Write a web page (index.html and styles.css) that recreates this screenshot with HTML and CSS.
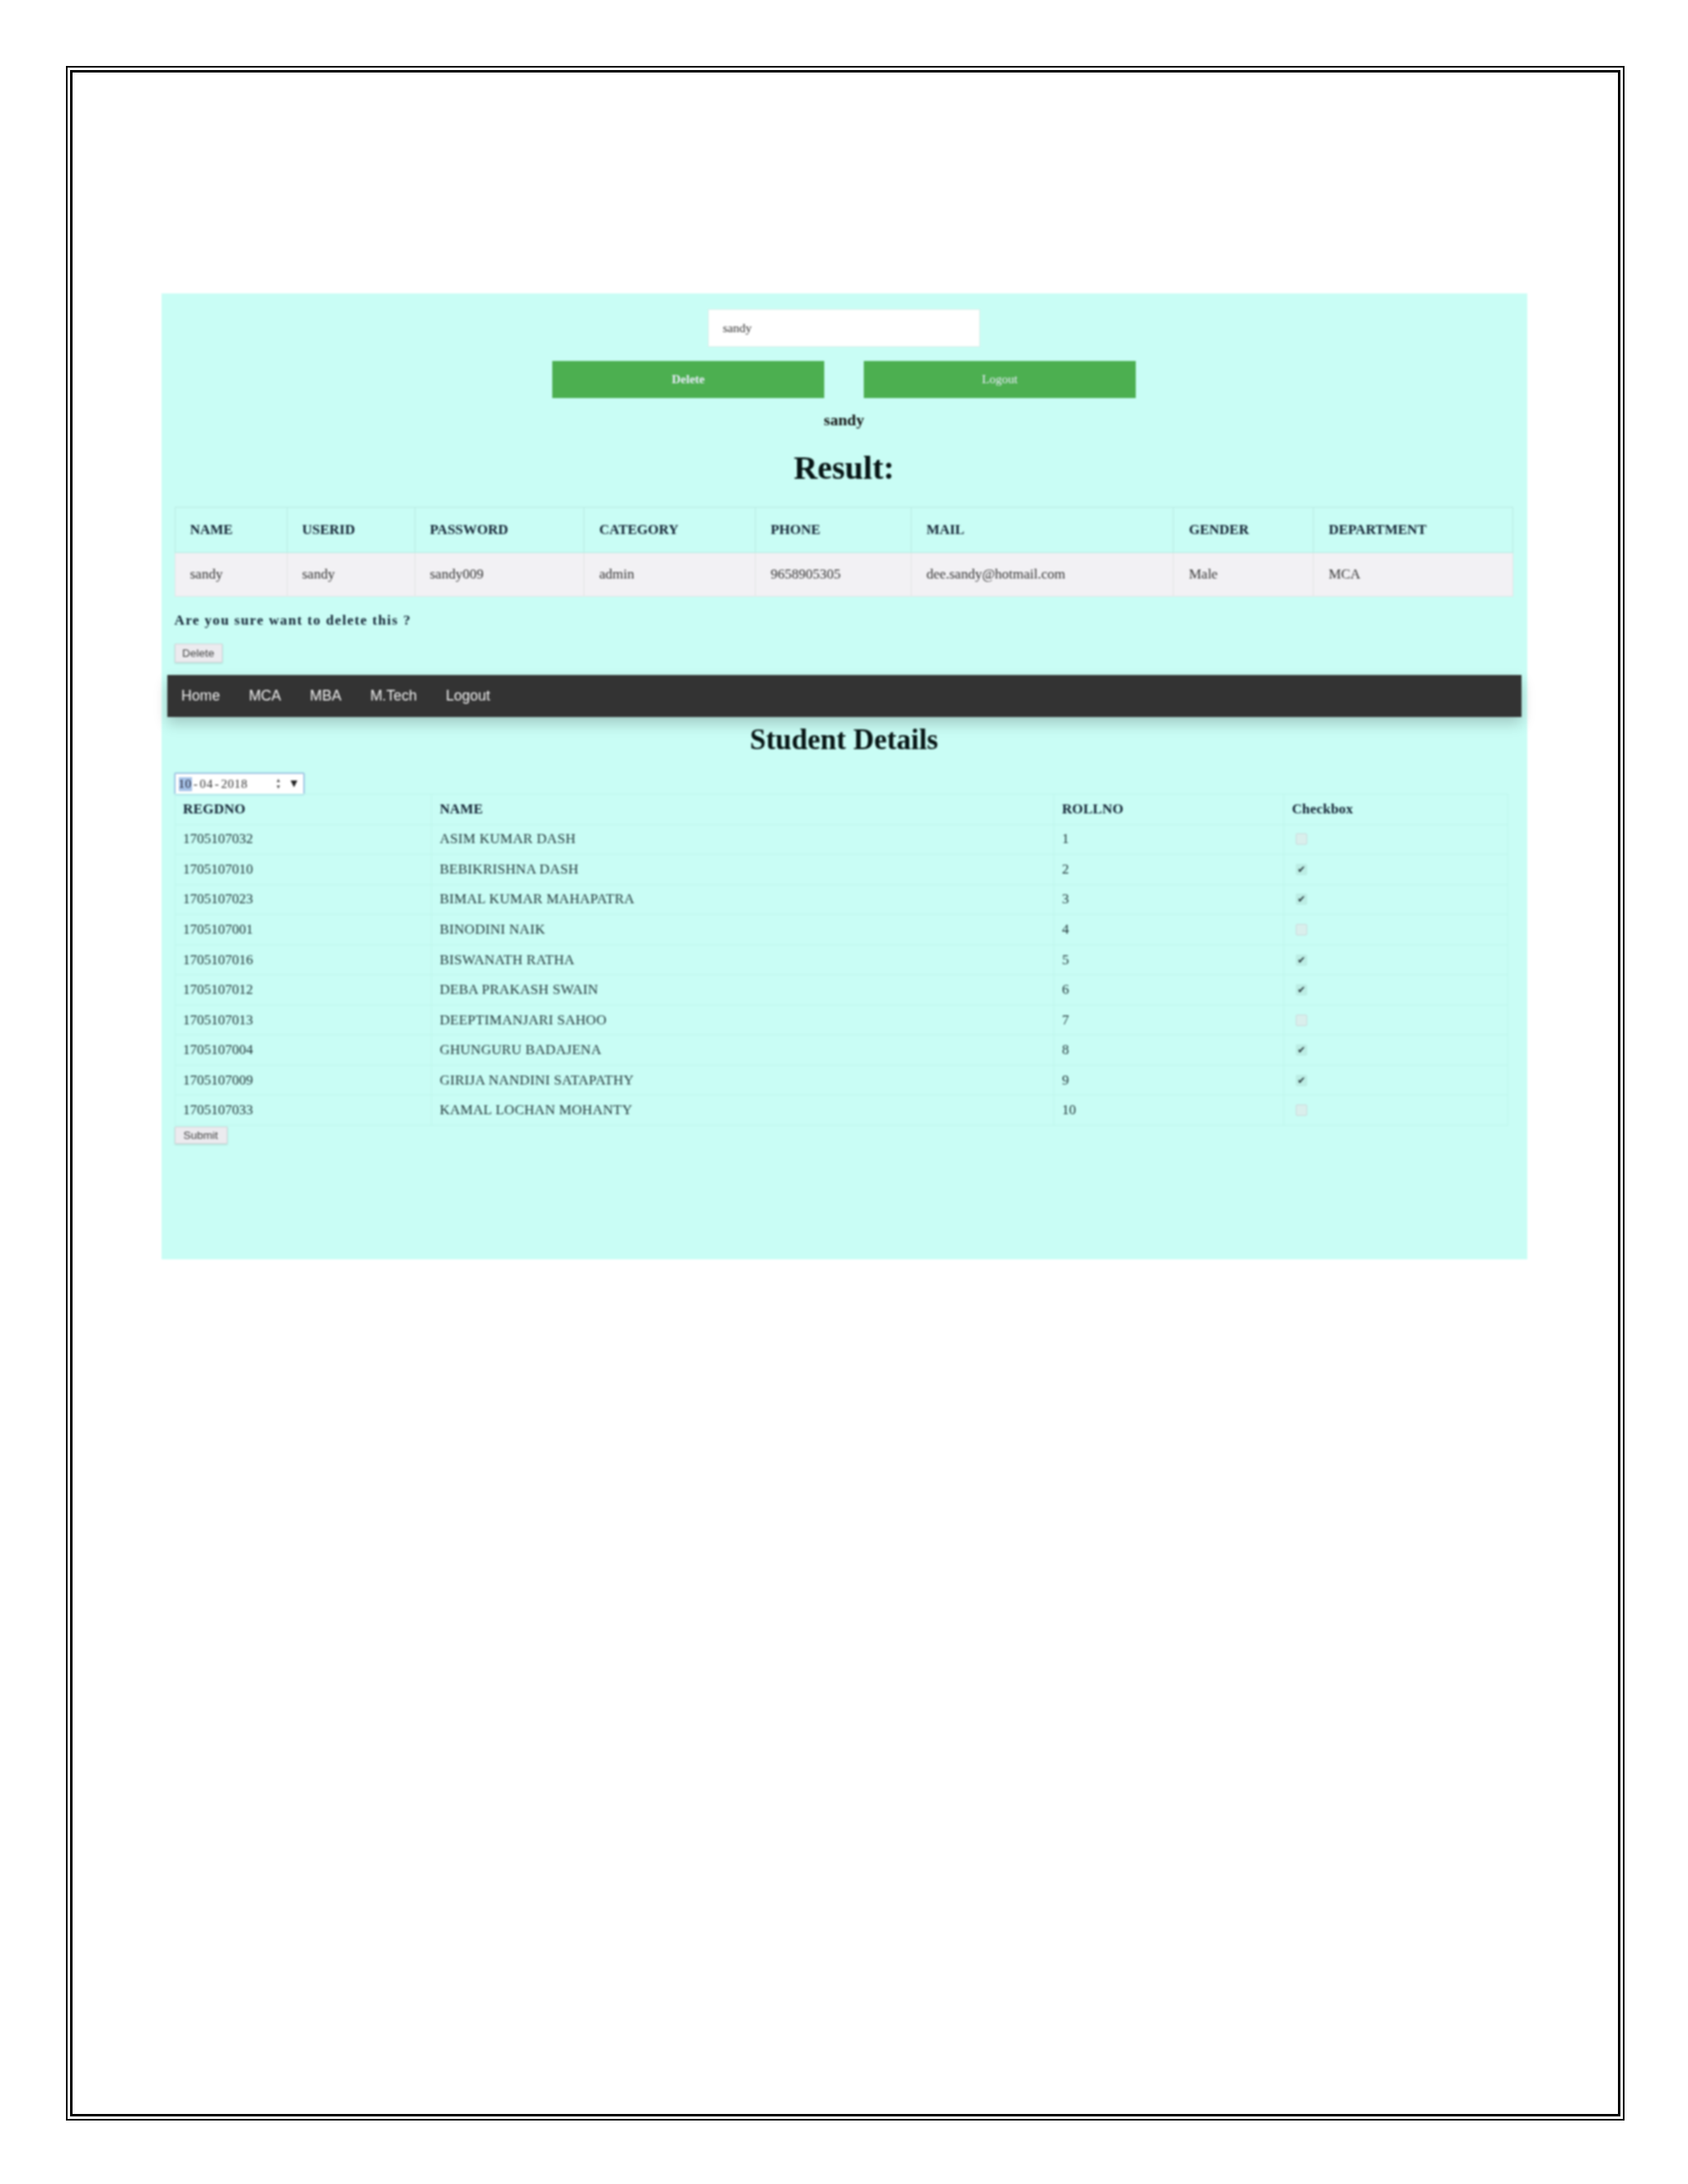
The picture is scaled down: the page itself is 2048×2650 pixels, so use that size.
FILE: index.html
```html
<!DOCTYPE html>
<html lang="en">
<head>
<meta charset="utf-8">
<title>Student Details</title>
<link rel="stylesheet" href="styles.css">
</head>
<body>
<div class="frame">
  <div class="frame-inner">
    <main class="panel">
      <div class="user-input">sandy</div>
      <div class="actions">
        <button class="action action-bold">Delete</button>
        <button class="action">Logout</button>
      </div>
      <p class="username">sandy</p>
      <h1 class="result-title">Result:</h1>
      <table class="result-table">
        <thead>
          <tr>
            <th class="rc1">NAME</th><th class="rc2">USERID</th><th class="rc3">PASSWORD</th><th class="rc4">CATEGORY</th>
            <th class="rc5">PHONE</th><th class="rc6">MAIL</th><th class="rc7">GENDER</th><th class="rc8">DEPARTMENT</th>
          </tr>
        </thead>
        <tbody>
          <tr>
            <td>sandy</td><td>sandy</td><td>sandy009</td><td>admin</td>
            <td>9658905305</td><td>dee.sandy@hotmail.com</td><td>Male</td><td>MCA</td>
          </tr>
        </tbody>
      </table>
      <p class="confirm">Are you sure want to delete this ?</p>
      <button class="plain-btn delete-btn">Delete</button>
      <nav class="navbar">
        <a href="#">Home</a><a href="#">MCA</a><a href="#">MBA</a><a href="#">M.Tech</a><a href="#">Logout</a>
      </nav>
      <h2 class="students-title">Student Details</h2>
      <div class="date-field">
        <span class="date-text"><span class="date-sel">10</span><span class="date-sep">-</span>04<span class="date-sep">-</span>2018</span>
        <span class="date-spin"><i>▲</i><i>▼</i></span>
        <span class="date-arrow">▼</span>
      </div>
      <table class="students-table">
        <thead>
          <tr><th class="sc1">REGDNO</th><th class="sc2">NAME</th><th class="sc3">ROLLNO</th><th class="sc4">Checkbox</th></tr>
        </thead>
        <tbody>
          <tr><td>1705107032</td><td class="student-name">ASIM KUMAR DASH</td><td>1</td><td><input type="checkbox" class="chk"></td></tr>
          <tr><td>1705107010</td><td class="student-name">BEBIKRISHNA DASH</td><td>2</td><td><input type="checkbox" class="chk" checked></td></tr>
          <tr><td>1705107023</td><td class="student-name">BIMAL KUMAR MAHAPATRA</td><td>3</td><td><input type="checkbox" class="chk" checked></td></tr>
          <tr><td>1705107001</td><td class="student-name">BINODINI NAIK</td><td>4</td><td><input type="checkbox" class="chk"></td></tr>
          <tr><td>1705107016</td><td class="student-name">BISWANATH RATHA</td><td>5</td><td><input type="checkbox" class="chk" checked></td></tr>
          <tr><td>1705107012</td><td class="student-name">DEBA PRAKASH SWAIN</td><td>6</td><td><input type="checkbox" class="chk" checked></td></tr>
          <tr><td>1705107013</td><td class="student-name">DEEPTIMANJARI SAHOO</td><td>7</td><td><input type="checkbox" class="chk"></td></tr>
          <tr><td>1705107004</td><td class="student-name">GHUNGURU BADAJENA</td><td>8</td><td><input type="checkbox" class="chk" checked></td></tr>
          <tr><td>1705107009</td><td class="student-name">GIRIJA NANDINI SATAPATHY</td><td>9</td><td><input type="checkbox" class="chk" checked></td></tr>
          <tr><td>1705107033</td><td class="student-name">KAMAL LOCHAN MOHANTY</td><td>10</td><td><input type="checkbox" class="chk"></td></tr>
        </tbody>
      </table>
      <button class="plain-btn submit-btn">Submit</button>
    </main>
  </div>
</div>
</body>
</html>
```
FILE: styles.css
```css
* { box-sizing: border-box; }

html, body { margin: 0; padding: 0; background: #fff; }

body {
  width: 2048px;
  height: 2650px;
  overflow: hidden;
  padding: 80px 77px 77px 80px;
  font-family: "Liberation Serif", serif;
  color: #111;
}

.frame {
  height: 2493px;
  border: 2px solid #000;
  padding: 3px;
}

.frame-inner {
  height: 100%;
  border: 3px solid #000;
  padding: 268px 0 0 107.5px;
}

.panel {
  width: 1657px;
  height: 1172px;
  background: #c9fdf5;
  display: flex;
  flex-direction: column;
  filter: blur(0.8px);
  font-size: 17px;
}

.user-input {
  align-self: center;
  width: 330px;
  height: 46px;
  margin-top: 19px;
  padding: 0 17px;
  background: #fff;
  border: 1px solid #ddeeea;
  line-height: 44px;
  font-size: 15px;
  color: #333;
}

.actions {
  align-self: center;
  display: flex;
  gap: 48px;
  margin-top: 17px;
}

.action {
  width: 330px;
  height: 45px;
  border: 0;
  background: #4caf50;
  color: #eef;
  font-family: "Liberation Serif", serif;
  font-size: 15px;
  padding: 0;
}

.action-bold { font-weight: bold; }

.username {
  margin: 16px 0 0;
  text-align: center;
  font-weight: bold;
  font-size: 19.5px;
  line-height: 22px;
}

.result-title {
  margin: 24px 0 0;
  text-align: center;
  font-size: 40px;
  line-height: 46px;
  font-weight: bold;
  color: #061414;
}

.result-table,
.students-table {
  border-collapse: collapse;
  table-layout: fixed;
  margin-left: 16px;
}

.result-table {
  width: 1623.5px;
  margin-top: 24px;
}

.result-table th,
.result-table td {
  border: 1px solid #b9ebe2;
  padding: 0 0 0 18px;
  text-align: left;
  color: #222;
}

.result-table th { height: 55px; font-weight: bold; color: #123; }
.result-table td { height: 53px; background: #f2f1f4; color: #333; border-color: #e2e6e6; }

.rc1 { width: 136px; }
.rc2 { width: 155px; }
.rc3 { width: 205.4px; }
.rc4 { width: 208px; }
.rc5 { width: 189px; }
.rc6 { width: 318.6px; }
.rc7 { width: 169.4px; }
.rc8 { width: 242px; }

.confirm {
  margin: 18px 0 0 16px;
  font-weight: bold;
  font-size: 17px;
  letter-spacing: 1.35px;
  line-height: 22px;
  color: #123;
}

.plain-btn {
  align-self: flex-start;
  margin-left: 16px;
  padding: 0;
  border: 1px solid #d4d4d8;
  background: #ecebef;
  color: #444;
  font-family: "Liberation Sans", sans-serif;
  font-size: 13.5px;
  box-shadow: 0 1px 2px rgba(0, 0, 0, 0.15);
}

.delete-btn { width: 58px; height: 23px; margin-top: 17px; }
.submit-btn { width: 64px; height: 21px; margin-top: 1px; }

.navbar {
  display: flex;
  align-items: center;
  width: 1642.6px;
  height: 51px;
  margin: 15px 0 0 7.5px;
  padding-left: 17px;
  background: #333;
  box-shadow: 0 8px 16px rgba(0, 0, 0, 0.2);
  font-family: "Liberation Sans", sans-serif;
  font-size: 17.6px;
}

.navbar a {
  color: #f2f2f2;
  text-decoration: none;
  margin-right: 35px;
}

.students-title {
  margin: 8px 0 0;
  text-align: center;
  font-size: 35px;
  line-height: 40px;
  font-weight: bold;
  color: #061414;
}

.date-field {
  display: flex;
  align-items: center;
  width: 157px;
  height: 26px;
  margin: 20px 0 0 16px;
  padding: 0 4px;
  background: #fff;
  border: 1px solid #8fb4dc;
  box-shadow: 0 0 2px #7ea6d8;
  font-size: 15px;
  color: #333;
}

.date-text { display: flex; width: 116px; letter-spacing: 0.6px; }
.date-sel { background: #a8c4ea; color: #223; }
.date-sep { margin: 0 2px; }

.date-spin {
  display: flex;
  flex-direction: column;
  width: 12px;
  font-size: 7px;
  line-height: 8px;
  color: #555;
  align-items: center;
}

.date-spin i { font-style: normal; }

.date-arrow {
  margin-left: 6px;
  font-size: 14px;
  color: #222;
}

.students-table {
  width: 1618px;
  margin-top: -1px;
}

.students-table th,
.students-table td {
  height: 36.55px;
  padding: 0 0 0 9.5px;
  border: 1px solid #bff6ec;
  text-align: left;
  font-weight: normal;
  color: #22373a;
}

.students-table th { font-weight: bold; color: #123; letter-spacing: 0.2px; }
.students-table .student-name { letter-spacing: 0.3px; }

.sc1 { width: 311.4px; }
.sc2 { width: 755px; }
.sc3 { width: 279px; }
.sc4 { width: 272.5px; }

.chk {
  appearance: none;
  display: block;
  position: relative;
  width: 14px;
  height: 14px;
  margin: 0 0 0 4.5px;
  border: 1px solid #cbdcdc;
  border-radius: 2px;
  background: #d9efec;
}

.chk:checked { border-color: #bceee5; background: #bceee5; }

.chk:checked::after {
  content: "✔";
  position: absolute;
  left: 1px;
  top: -2px;
  font-family: "DejaVu Sans", sans-serif;
  font-size: 12px;
  line-height: 16px;
  color: #2c3c40;
}
```
